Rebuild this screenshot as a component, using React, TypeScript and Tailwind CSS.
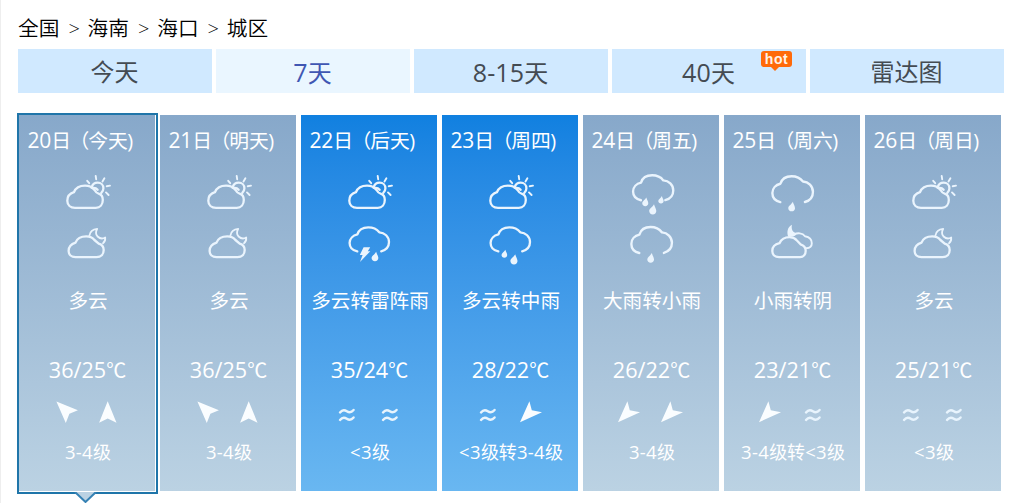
import type { ReactNode } from 'react';

type Sky = 'sun' | 'moon' | 'storm' | 'moderate' | 'heavy' | 'light' | 'lightNight' | 'overcast';
type Wind = 'nw' | 'n' | 'sw' | 'calm';

interface Day {
  date: string;
  weekday: string;
  sky: [Sky, Sky];
  text: string;
  temp: string;
  wind: [Wind, Wind];
  level: string;
  blue?: boolean;
}

const DAYS: Day[] = [
  { date: '20日', weekday: '今天', sky: ['sun', 'moon'], text: '多云', temp: '36/25', wind: ['nw', 'n'], level: '3-4级' },
  { date: '21日', weekday: '明天', sky: ['sun', 'moon'], text: '多云', temp: '36/25', wind: ['nw', 'n'], level: '3-4级' },
  { date: '22日', weekday: '后天', sky: ['sun', 'storm'], text: '多云转雷阵雨', temp: '35/24', wind: ['calm', 'calm'], level: '<3级', blue: true },
  { date: '23日', weekday: '周四', sky: ['sun', 'moderate'], text: '多云转中雨', temp: '28/22', wind: ['calm', 'sw'], level: '<3级转3-4级', blue: true },
  { date: '24日', weekday: '周五', sky: ['heavy', 'lightNight'], text: '大雨转小雨', temp: '26/22', wind: ['sw', 'sw'], level: '3-4级' },
  { date: '25日', weekday: '周六', sky: ['light', 'overcast'], text: '小雨转阴', temp: '23/21', wind: ['sw', 'calm'], level: '3-4级转<3级' },
  { date: '26日', weekday: '周日', sky: ['sun', 'moon'], text: '多云', temp: '25/21', wind: ['calm', 'calm'], level: '<3级' },
];

const TABS = ['今天', '7天', '8-15天', '40天', '雷达图'];

/** Sets Latin runs at their own size beside the Chinese text. */
function Mixed({ text, latin }: { text: string; latin: string }) {
  return (
    <>
      {text.split(/([\x20-\x7e]+)/).map((run, i) =>
        i % 2 ? (
          <span key={i} className={latin}>
            {run}
          </span>
        ) : (
          run
        ),
      )}
    </>
  );
}

function Drop({ x, y, s = 1 }: { x: number; y: number; s?: number }) {
  return (
    <path
      transform={`translate(${x} ${y}) scale(${s})`}
      d="M1.2 -5.2 C1.8 -2.6 3.5 -0.6 3.5 1.5 C3.5 3.5 2 4.9 0 4.9 C-2.1 4.9 -3.6 3.5 -3.6 1.5 C-3.6 -0.8 -0.3 -2.3 1.2 -5.2Z"
      fill="currentColor"
      stroke="none"
    />
  );
}

const RAIN_CLOUD =
  'M16.3 31.4 C11.5 30.3 8.6 27.2 8.6 23 C8.6 18.6 12 15.4 16.4 14.4 C17.7 10.2 21.7 7.4 27.3 7.4 C32.3 7.4 36 9.4 38.3 12.3 C43.6 12.6 48 16.6 48 22 C48 26.7 44.7 30.1 40.2 31.3';

const SKY: Record<Sky, ReactNode> = {
  sun: (
    <>
      <path d="M16 37.8H36.8C41.2 37.8 43.8 34.4 43.8 30C43.8 26.4 42.4 24.3 39.6 23.6C37.5 23.1 36.6 22 35.5 20C33.5 17 30 15.7 26 15.7C20.8 15.7 16.6 18.2 14.9 22.2C11 23.4 8.3 26.6 8.3 30.8C8.3 35 11.5 37.8 16 37.8Z" />
      <path d="M32.6 17.7C33.3 14.5 35.7 12.7 38.7 12.7C42 12.7 44.4 15.1 44.4 18.2C44.4 20.2 43.6 21.8 42.3 22.9M33.4 18.1C35.4 17.8 37.3 18.2 38.6 19.8" />
      <path d="M28.2 10.8L30.2 13.2M36.7 6L37.2 9.4M45.4 8.3L43.5 11.4M51 15.6L47.7 16.3M49.6 25L47 22.4" strokeWidth="1.9" />
    </>
  ),
  moon: (
    <>
      <path d="M16.5 37.1H37.5C42 37.1 44.7 34.1 44.7 30C44.7 26.7 42.7 24.4 39.7 23.6L35.4 20C33.4 17.4 30.7 16.4 27.2 16.4C22 16.4 18 18.9 16.5 22.6C12.3 24 9.6 27.2 9.6 30.9C9.6 34.5 12.4 37.1 16.5 37.1Z" />
      <path d="M30.4 15.6C31 11.9 34.1 9.2 38.2 8.9C36.9 11.3 36.5 14.5 38.6 16.5C40.7 18.5 43.7 19 46.2 17.5C46.4 19.7 45.6 22.1 44 23.3" strokeWidth="1.8" />
    </>
  ),
  storm: (
    <>
      <path d={RAIN_CLOUD} />
      <path d="M22.6 27.2H29.2L26.8 31.2H29.3L19 42L21.6 35H18.8Z" fill="currentColor" stroke="none" />
      <Drop x={34} y={36.6} s={0.95} />
    </>
  ),
  moderate: (
    <>
      <path d={RAIN_CLOUD} />
      <Drop x={22.4} y={33.8} s={0.8} />
      <Drop x={32} y={39.5} />
    </>
  ),
  heavy: (
    <>
      <path transform="translate(1.3 -2.4) scale(1.02 1.04)" d={RAIN_CLOUD} />
      <Drop x={22.3} y={32} s={0.85} />
      <Drop x={29.8} y={39.5} />
      <Drop x={38} y={29.8} s={0.75} />
    </>
  ),
  light: (
    <>
      <path transform="translate(-.5 -1.8) scale(1.03 1.08)" d={RAIN_CLOUD} />
      <Drop x={27.7} y={36.7} s={0.95} />
    </>
  ),
  lightNight: (
    <>
      <path transform="translate(-.5 -.9) scale(1.03 1.08)" d={RAIN_CLOUD} />
      <Drop x={27.7} y={38} s={0.95} />
    </>
  ),
  overcast: (
    <>
      <path d="M15 37.1H36C39.5 37.1 41.7 34.4 41.7 30.8C41.7 27.4 39.8 25.3 36.5 24.3L32.9 20.5C31 18.3 28.6 17.2 25.6 17.2C21 17.2 17.3 19.3 15.5 23.2C11 24.2 8.3 27.2 8.3 31C8.3 34.5 11 37.1 15 37.1Z" />
      <path d="M30.5 14.5C33 12.8 38.5 12.5 41 16.2C45.2 17 47.8 19.6 47.8 23.2C47.8 26.2 45.5 28 42.2 28.2" strokeWidth="1.9" />
      <path d="M28 4.8C23.4 6.8 22.6 12.8 24.2 16.5H29C31 16 32.2 14.9 32.7 13C28.8 12.8 26.9 9.2 28 4.8Z" fill="currentColor" stroke="none" />
    </>
  ),
};

function SkyIcon({ kind }: { kind: Sky }) {
  return (
    <svg
      className="ml-10 block h-[50px] w-[60px] text-[#eaf4fd]"
      viewBox="0 0 60 50"
      fill="none"
      stroke="currentColor"
      strokeWidth="2.3"
      strokeLinecap="round"
      strokeLinejoin="round"
    >
      {SKY[kind]}
    </svg>
  );
}

const WIND: Record<Wind, ReactNode> = {
  nw: <path d="M5.4 4.4L26.9 13.3L18.4 16.8L14.8 26Z" fill="currentColor" />,
  n: <path d="M13.7 4.2L22.5 25.7L13.7 21.4L5.1 25.7Z" fill="currentColor" />,
  sw: <path d="M3 25.2L12.4 4.2L14.8 13.3L25 15.2Z" fill="currentColor" />,
  calm: (
    <path
      d="M7 15.4C9.5 12.3 11.5 12.6 13.8 14.2C16.2 15.8 18.3 15.7 20.6 13M7 22.9C9.5 19.8 11.5 20.1 13.8 21.7C16.2 23.3 18.3 23.2 20.6 20.5"
      fill="none"
      stroke="#e8f4fd"
      strokeWidth="2.4"
      strokeLinecap="round"
    />
  ),
};

function WindIcon({ kind }: { kind: Wind }) {
  return (
    <svg className="block h-[30px] w-[43px] text-[#fafdff]" viewBox="0 0 43 30">
      {WIND[kind]}
    </svg>
  );
}

function Forecast({ day }: { day: Day }) {
  return (
    <div
      className={`h-[376px] w-[136px] shrink-0 bg-linear-to-b whitespace-nowrap text-white ${
        day.blue ? 'from-[#1080e0] to-[#69b7f1]' : 'from-[#87a8ca] to-[#bbd2e3]'
      }`}
    >
      <div className="mb-[5px] flex h-[50px] items-baseline pl-[8.5px] text-[19.8px] leading-[50px]">
        <Mixed text={day.date} latin="text-[21px] font-medium tracking-[-0.2px]" />
        <span className="-mr-px -ml-[1.5px]">（</span>
        {day.weekday}
        <span className="-ml-[0.5px] w-2 font-['Open_Sans',sans-serif] text-[20px]">)</span>
      </div>
      <SkyIcon kind={day.sky[0]} />
      <SkyIcon kind={day.sky[1]} />
      <div className="mt-px mb-3 flex h-[60px] justify-center pl-[2px] text-[19.6px] leading-[60px]">{day.text}</div>
      <div className="flex h-[54px] items-baseline justify-center pl-px text-[20px] leading-[54px]">
        <span className="text-[21.6px] font-medium">{day.temp}</span>
        <span className="font-['Noto_Sans_CJK_SC',sans-serif]">℃</span>
      </div>
      <div className="flex h-[30px] pl-8">
        <WindIcon kind={day.wind[0]} />
        <WindIcon kind={day.wind[1]} />
      </div>
      <div className="flex h-[50px] items-baseline justify-center pl-[2px] text-[18px] leading-[50px]">
        <Mixed text={day.level} latin="text-[18.5px] tracking-[0.3px]" />
      </div>
    </div>
  );
}

export default function App() {
  return (
    <main className="h-[503px] w-[1021px] overflow-hidden border-l border-[#eeeeee] bg-white pl-[17px] font-['Open_Sans','Noto_Sans_CJK_SC',sans-serif]">
      <nav className="flex h-[49px] items-baseline pt-[7px] text-[20.7px] leading-[42px] font-[350] text-black">
        {['全国', '海南', '海口', '城区'].map((place, i) => (
          <span key={place} className="flex items-baseline">
            {i > 0 && <span className="w-[28px] pl-px text-center text-[20px]">&gt;</span>}
            <span className="w-[41.6px]">{place}</span>
          </span>
        ))}
      </nav>

      <div className="flex gap-1">
        {TABS.map((tab, i) => (
          <div
            key={tab}
            className={`relative h-11 w-[194px] pr-px text-center text-[24px] leading-[46px] ${
              i === 1 ? 'bg-[#eaf6ff] text-[#4056b3]' : 'bg-[#d0e9ff] text-[#444b52]'
            }`}
          >
            <Mixed text={tab} latin="text-[25px] tracking-[0.1px]" />
            {i === 3 && (
              <span className="absolute top-[2px] left-[149px] flex h-[16px] w-[31px] justify-center rounded-[3px] bg-[#ff6a0a] font-['Liberation_Sans',sans-serif] text-[14px] leading-[16px] font-bold tracking-[0.5px] text-[#fff3e8]">
                hot
                <svg className="absolute top-[16px] left-[10px] h-1 w-2" viewBox="0 0 8 4">
                  <path d="M0 0H8L4 4Z" fill="#ff6a0a" />
                </svg>
              </span>
            )}
          </div>
        ))}
      </div>

      <div className="mt-5 -ml-px flex items-start">
        <div className="relative mr-[2px] h-[381px] w-[141px] shrink-0 border-2 border-[#1f75a9] bg-white">
          <Forecast day={DAYS[0]} />
          <svg className="absolute top-[376px] left-[55px] h-3 w-[23px]" viewBox="0 0 23 12">
            <path d="M0 0H23L11.5 11Z" fill="#bbd2e3" />
            <path d="M1 1L11.5 11L22 1" fill="none" stroke="#3682b4" strokeWidth="2" />
            <path d="M0 .5H23" stroke="#fff" />
          </svg>
        </div>
        <div className="mt-[2px] flex gap-[5px]">
          {DAYS.slice(1).map((day) => (
            <Forecast key={day.date} day={day} />
          ))}
        </div>
      </div>
    </main>
  );
}
